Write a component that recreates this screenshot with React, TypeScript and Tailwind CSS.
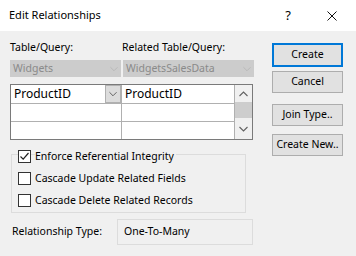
import React from "react";

const font = { fontFamily: '"Segoe UI", "Noto Sans", "Open Sans", sans-serif' };

function Chevron({ up = false, color = "#606060", w = 9 }: { up?: boolean; color?: string; w?: number }) {
  return (
    <svg width={w} height={6} viewBox="0 0 9 6">
      {up ? (
        <path d="M0.5 5 L4.5 1 L8.5 5" fill="none" stroke={color} strokeWidth="1.1" />
      ) : (
        <path d="M0.5 1 L4.5 5 L8.5 1" fill="none" stroke={color} strokeWidth="1.1" />
      )}
    </svg>
  );
}

function Check({ checked, label, mt }: { checked?: boolean; label: string; mt: string }) {
  return (
    <div className={`flex items-center ${mt}`}>
      <div className="w-[13px] h-[13px] border border-[#333333] bg-white flex items-center justify-center">
        {checked && (
          <svg width="11" height="11" viewBox="0 0 11 11">
            <path d="M1.5 5.5 L4.2 8.2 L9.5 2" fill="none" stroke="#222" strokeWidth="1.2" />
          </svg>
        )}
      </div>
      <span className="ml-[4px] text-[10.5px] leading-none text-black bg-[#f0f0f0] pr-[2px]">{label}</span>
    </div>
  );
}

function Btn({ label, def, mt, h }: { label: string; def?: boolean; mt: string; h: string }) {
  return (
    <div
      className={`${mt} ${h} w-[71px] flex items-center justify-center bg-[#e1e1e1] text-[10.5px] text-black whitespace-nowrap ${
        def ? "border-2 border-[#0078d7]" : "border border-[#adadad]"
      }`}
    >
      {label}
    </div>
  );
}

export default function App() {
  return (
    <div className="w-[356px] h-[256px] bg-[#f0f0f0] overflow-hidden relative" style={font}>
      <div className="h-[31px] bg-white flex items-center">
        <span className="ml-[9px] text-[11px] text-black">Edit Relationships</span>
        <span className="ml-auto mr-[36px] text-[13px] text-black">?</span>
        <svg width="10" height="10" viewBox="0 0 10 10" className="mr-[19px]">
          <path d="M0.5 0.5 L9.5 9.5 M9.5 0.5 L0.5 9.5" stroke="#111" strokeWidth="1" />
        </svg>
      </div>
      <div className="flex">
        <div className="ml-[10px] w-[244px] flex flex-col">
          <div className="flex mt-[9px] h-[15px] text-[10.5px] leading-[15px] text-black">
            <span className="w-[112px]">Table/Query:</span>
            <span>Related Table/Query:</span>
          </div>
          <div className="flex mt-[5px] h-[17px]">
            <div className="w-[111px] bg-[#cccccc] flex items-center px-[3px] text-[10.5px] text-[#8a8a8a]">
              Widgets
              <span className="ml-auto">
                <Chevron color="#b8b8b8" w={8} />
              </span>
            </div>
            <div className="ml-[2px] w-[131px] bg-[#cccccc] flex items-center px-[3px] text-[10.5px] text-[#8a8a8a]">
              WidgetsSalesData
              <span className="ml-auto">
                <Chevron color="#b8b8b8" w={8} />
              </span>
            </div>
          </div>
          <div className="mt-[7px] h-[56px] w-[243px] border border-[#7a7a7a] bg-white flex">
            <div className="w-[111px] border-r border-[#b0b0b0] flex flex-col">
              <div className="h-[19px] border-b border-[#b0b0b0] flex items-center">
                <span className="ml-[3px] text-[12px] leading-none text-black">ProductID</span>
                <div className="ml-auto h-[18px] w-[16px] bg-[#dcdcdc] border border-[#b0b0b0] flex items-center justify-center">
                  <Chevron w={8} />
                </div>
              </div>
              <div className="h-[18px] border-b border-[#b0b0b0]" />
            </div>
            <div className="w-[113px] border-r border-[#b0b0b0] flex flex-col">
              <div className="h-[19px] border-b border-[#b0b0b0] flex items-center">
                <span className="ml-[3px] text-[12px] leading-none text-black">ProductID</span>
              </div>
              <div className="h-[18px] border-b border-[#b0b0b0]" />
            </div>
            <div className="flex-1 bg-[#f0f0f0] flex flex-col items-center">
              <div className="h-[17px] flex items-center">
                <Chevron up />
              </div>
              <div className="h-[16px] w-full bg-[#cdcdcd]" />
              <div className="flex-1 flex items-center">
                <Chevron />
              </div>
            </div>
          </div>
          <div className="mt-[14px] h-[59px] w-[235px] ml-[1px] border border-[#dcdcdc] relative">
            <div className="ml-[6px] -mt-[5px]">
              <Check checked label="Enforce Referential Integrity" mt="" />
              <Check label="Cascade Update Related Fields" mt="mt-[9px]" />
              <Check label="Cascade Delete Related Records" mt="mt-[9px]" />
            </div>
          </div>
          <div className="flex mt-[6px] h-[26px] items-center">
            <span className="ml-[2px] w-[105px] text-[10.5px] text-black">Relationship Type:</span>
            <div className="w-[136px] h-[26px] border border-[#dcdcdc] flex items-center pl-[6px] text-[10.5px] text-black">
              One-To-Many
            </div>
          </div>
        </div>
        <div className="ml-[18px] flex flex-col">
          <Btn label="Create" def mt="mt-[12px]" h="h-[24px]" />
          <Btn label="Cancel" mt="mt-[4px]" h="h-[22px]" />
          <Btn label="Join Type.." mt="mt-[11px]" h="h-[22px]" />
          <Btn label="Create New.." mt="mt-[8px]" h="h-[22px]" />
        </div>
      </div>
    </div>
  );
}
